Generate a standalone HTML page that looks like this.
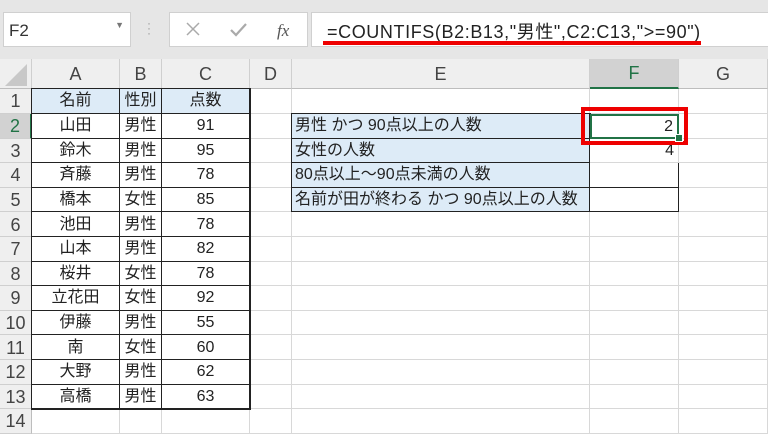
<!DOCTYPE html>
<html><head><meta charset="utf-8"><style>
body{margin:0;width:768px;height:416px;overflow:hidden;background:#e6e6e6;font-family:"Liberation Sans","Noto Sans CJK JP",sans-serif;position:relative}
.box{position:absolute;background:#fff;border:1px solid #d0d0d0;box-sizing:border-box}
table{position:absolute;left:0;top:59px;border-collapse:separate;border-spacing:0;table-layout:fixed;background:#fff}
td{border-right:1px solid #d8d8d8;border-bottom:1px solid #d8d8d8;padding:0;padding-top:1px;height:24.6px;line-height:20px;box-sizing:border-box;font-size:16px;color:#222;white-space:nowrap;overflow:hidden}
tr.h td{height:30px;padding-top:0;background:#efefef;font-size:18px;color:#444;text-align:center;border-right-color:#cfcfcf;border-bottom-color:#bdbdbd}
td.r{background:#efefef;font-size:18px;color:#444;text-align:center;border-right-color:#bdbdbd;border-bottom-color:#cfcfcf}
.c{text-align:center}.b{background:#ddebf7}
.k{border-right-color:#222;border-bottom-color:#222}
.e{padding-left:3px}
</style></head><body>
<div class="box" style="left:3px;top:12px;width:128px;height:35px;font-size:17px;color:#333;padding:8px 0 0 5px">F2<span style="position:absolute;right:6px;top:7px;font-size:9px;color:#777">▼</span></div>
<div style="position:absolute;left:147px;top:21px;color:#999;font-size:12px;line-height:5px">·<br>·<br>·</div>
<div class="box" style="left:169px;top:12px;width:139px;height:35px">
<svg width="139" height="33" style="position:absolute;left:0;top:0"><path d="M17 10 L29 22 M29 10 L17 22" stroke="#aaa" stroke-width="1.5"/><path d="M61 17 L66 22 L76 11" stroke="#aaa" stroke-width="2.2" fill="none"/><text x="107" y="23" font-family="Liberation Serif,serif" font-style="italic" font-size="17" fill="#555">fx</text></svg></div>
<div class="box" style="left:311px;top:12px;width:470px;height:35px;font-size:18px;letter-spacing:0.6px;color:#222;padding:5px 0 0 15px;border-right:none">=COUNTIFS(B2:B13,"男性",C2:C13,"&gt;=90")</div>
<div style="position:absolute;left:323px;top:41px;width:378px;height:4px;background:#e00"></div>
<table>
<colgroup><col style="width:32px"><col style="width:88px"><col style="width:42px"><col style="width:88px"><col style="width:42px"><col style="width:298px"><col style="width:89px"><col style="width:89px"></colgroup>
<tr class="h"><td style="background:#efefef"><svg width="30" height="28" style="display:block"><path d="M27 4 L27 26 L5 26 Z" fill="#c8c8c8"/></svg></td><td>A</td><td>B</td><td>C</td><td>D</td><td>E</td><td style="background:#d2d2d2;color:#217346;border-bottom:2px solid #217346">F</td><td>G</td></tr>
<tr><td class="r">1</td><td class="c b k">名前</td><td class="c b k">性別</td><td class="c b k">点数</td><td></td><td></td><td></td><td></td></tr>
<tr><td class="r" style="background:#d2d2d2;color:#217346;border-right:2px solid #217346">2</td><td class="c k">山田</td><td class="c k">男性</td><td class="c k">91</td><td></td><td class="b k e">男性 かつ 90点以上の人数</td><td style="text-align:right;padding-right:4px;border:2px solid #217346">2</td><td></td></tr>
<tr><td class="r">3</td><td class="c k">鈴木</td><td class="c k">男性</td><td class="c k">95</td><td></td><td class="b k e">女性の人数</td><td style="text-align:right;padding-right:4px">4</td><td></td></tr>
<tr><td class="r">4</td><td class="c k">斉藤</td><td class="c k">男性</td><td class="c k">78</td><td></td><td class="b k e">80点以上～90点未満の人数</td><td class="k"></td><td></td></tr>
<tr><td class="r">5</td><td class="c k">橋本</td><td class="c k">女性</td><td class="c k">85</td><td></td><td class="b k e">名前が田が終わる かつ 90点以上の人数</td><td class="k"></td><td></td></tr>
<tr><td class="r">6</td><td class="c k">池田</td><td class="c k">男性</td><td class="c k">78</td><td></td><td></td><td></td><td></td></tr>
<tr><td class="r">7</td><td class="c k">山本</td><td class="c k">男性</td><td class="c k">82</td><td></td><td></td><td></td><td></td></tr>
<tr><td class="r">8</td><td class="c k">桜井</td><td class="c k">女性</td><td class="c k">78</td><td></td><td></td><td></td><td></td></tr>
<tr><td class="r">9</td><td class="c k">立花田</td><td class="c k">女性</td><td class="c k">92</td><td></td><td></td><td></td><td></td></tr>
<tr><td class="r">10</td><td class="c k">伊藤</td><td class="c k">男性</td><td class="c k">55</td><td></td><td></td><td></td><td></td></tr>
<tr><td class="r">11</td><td class="c k">南</td><td class="c k">女性</td><td class="c k">60</td><td></td><td></td><td></td><td></td></tr>
<tr><td class="r">12</td><td class="c k">大野</td><td class="c k">男性</td><td class="c k">62</td><td></td><td></td><td></td><td></td></tr>
<tr><td class="r">13</td><td class="c k">高橋</td><td class="c k">男性</td><td class="c k">63</td><td></td><td></td><td></td><td></td></tr>
<tr><td class="r">14</td><td></td><td></td><td></td><td></td><td></td><td></td><td></td></tr>
</table>
<div style="position:absolute;left:31px;top:88px;width:220px;height:322px;border:1px solid #222;box-sizing:border-box;pointer-events:none"></div>
<div style="position:absolute;left:291px;top:113px;width:300px;height:99px;border-left:1px solid #222;border-top:1px solid #222;box-sizing:border-box"></div>
<div style="position:absolute;left:581px;top:107px;width:107px;height:38px;border:4px solid #e00;box-sizing:border-box"></div>
<div style="position:absolute;left:675px;top:134px;width:6px;height:6px;background:#217346;border:1px solid #fff"></div>
</body></html>
